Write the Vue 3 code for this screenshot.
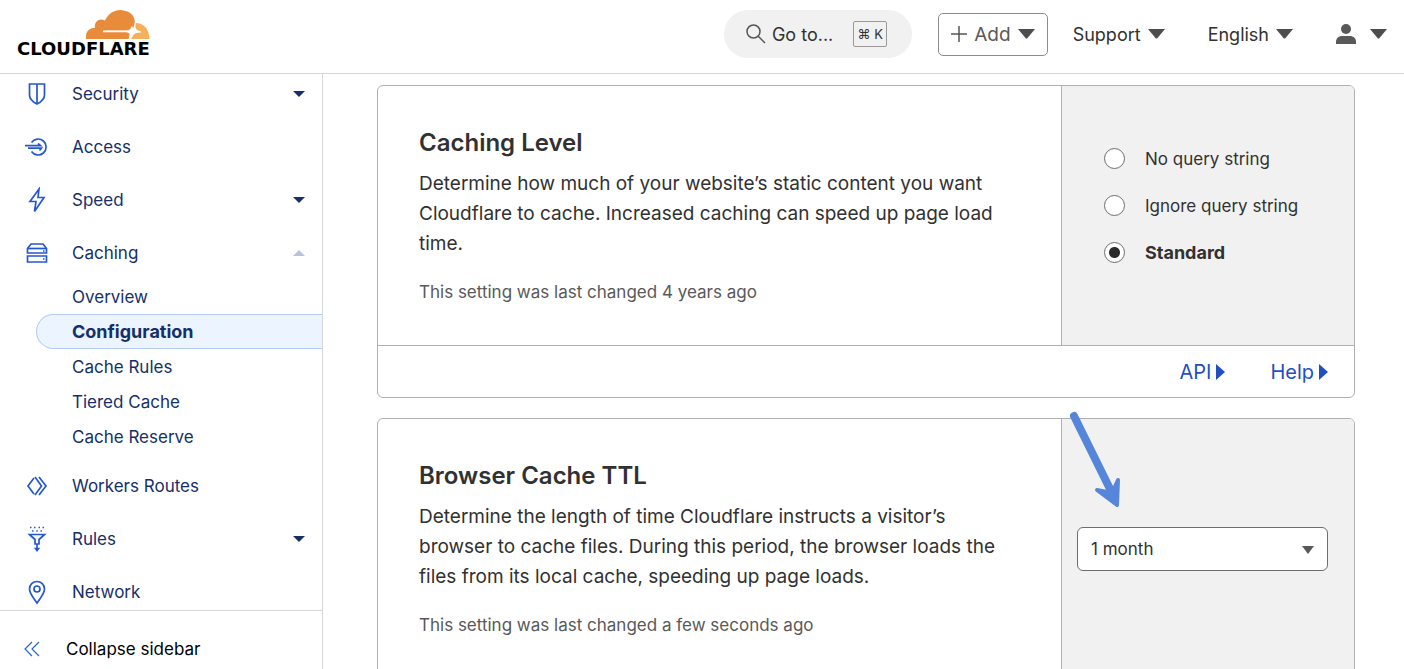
<template>
  <div class="page">
    <header class="topbar">
      <a class="logo" href="#" aria-label="Cloudflare home">
        <svg class="logo-cloud" width="64" height="29" viewBox="0 0 64 29" aria-hidden="true">
          <path
            fill="#e88b3a"
            d="M0 29C-1 22 3 18 9 17.700C8 12 13 7.500 19 10.500C23 3 29-.5 36 .2C45 .8 50 7 48.500 14L46.500 20.500H18L17 21.300H40.500C43 21.600 44 23 43.300 26L42.500 29Z"
          />
          <path fill="#f5b05c" d="M50 13C57 13 63 18 63.500 29H45.500C45 25 46 23.500 49 23L55 22.500V21.500L51 20C49 18 49 16 50 13Z" />
          <path fill="#fff" d="M17 20.700H40C44 20.500 45 18 46 15.500C47 19 48.500 21 53 21.900C48.500 23 47 25 45.500 28C44.500 24.500 43.500 22.700 40 22.300H17Z" />
        </svg>
        <span class="logo-text">CLOUDFLARE</span>
      </a>

      <button class="search" type="button">
        <svg width="20" height="20" viewBox="0 0 20 20" fill="none" stroke="#555" stroke-width="1.500">
          <circle cx="7.500" cy="7.500" r="6.500" />
          <path d="M12.300 12.300L19 19" />
        </svg>
        <span>Go to...</span>
        <kbd>⌘ K</kbd>
      </button>

      <button class="add" type="button">
        <svg width="16" height="16" viewBox="0 0 16 16" fill="none" stroke="#555" stroke-width="1.500">
          <path d="M8 0V16M0 8H16" />
        </svg>
        <span>Add</span>
        <svg class="caret" viewBox="0 0 17 10"><path d="M0 0H17L9.500 9Q8.500 10 7.500 9Z" /></svg>
      </button>

      <button v-for="item in menus" :key="item" class="menu" type="button">
        <span>{{ item }}</span>
        <svg class="caret" viewBox="0 0 17 10"><path d="M0 0H17L9.500 9Q8.500 10 7.500 9Z" /></svg>
      </button>

      <button class="menu user" type="button" aria-label="Account">
        <svg width="20" height="20" viewBox="0 0 20 20" fill="#595959">
          <circle cx="10" cy="5" r="5" />
          <path d="M0 20V18C0 14 3 12 6 12H14C17 12 20 14 20 18V20Z" />
        </svg>
        <svg class="caret" viewBox="0 0 17 10"><path d="M0 0H17L9.500 9Q8.500 10 7.500 9Z" /></svg>
      </button>
    </header>

    <div class="body">
      <aside class="sidebar">
        <nav class="nav">
          <div v-for="item in navItems" :key="item.label" class="nav-group">
            <a class="nav-item" href="#">
              <svg class="nav-icon" viewBox="0 0 26 26" aria-hidden="true">
                <path v-for="d in item.icon" :key="d" :d="d" />
              </svg>
              <span class="nav-label">{{ item.label }}</span>
              <svg v-if="item.children" class="nav-caret open" viewBox="0 0 12 6"><path d="M0 6L6 0L12 6Z" /></svg>
              <svg v-else-if="item.expandable" class="nav-caret" viewBox="0 0 12 6"><path d="M0 0H12L6 6Z" /></svg>
            </a>
            <div v-if="item.children" class="subnav">
              <a
                v-for="child in item.children"
                :key="child"
                class="sub-item"
                :class="{ active: child === activeChild }"
                href="#"
              >{{ child }}</a>
            </div>
          </div>
        </nav>
        <button class="collapse" type="button">
          <svg width="16" height="16" viewBox="0 0 16 16" fill="none" stroke="#2c62d6" stroke-width="1.200">
            <path d="M8 1L1 8L8 15M15 1L8 8L15 15" />
          </svg>
          <span>Collapse sidebar</span>
        </button>
      </aside>

      <main class="content">
        <section class="card">
          <div class="card-main">
            <div class="card-text">
              <h2>Caching Level</h2>
              <p class="desc">
                Determine how much of your website’s static content you want Cloudflare to cache. Increased caching can
                speed up page load time.
              </p>
              <p class="changed">This setting was last changed 4 years ago</p>
            </div>
            <div class="card-side options">
              <label v-for="level in levels" :key="level" class="option" :class="{ checked: level === cachingLevel }">
                <input v-model="cachingLevel" type="radio" name="caching-level" :value="level" />
                <span>{{ level }}</span>
              </label>
            </div>
          </div>
          <div class="card-footer">
            <a v-for="link in ['API', 'Help']" :key="link" href="#">
              {{ link }}
              <svg width="9" height="16" viewBox="0 0 9 16"><path fill="#1f4fc0" d="M0 0L9 8L0 16Z" /></svg>
            </a>
          </div>
        </section>

        <section class="card">
          <div class="card-main">
            <div class="card-text">
              <h2>Browser Cache TTL</h2>
              <p class="desc">
                Determine the length of time Cloudflare instructs a visitor’s browser to cache files. During this
                period, the browser loads the files from its local cache, speeding up page loads.
              </p>
              <p class="changed">This setting was last changed a few seconds ago</p>
            </div>
            <div class="card-side ttl">
              <div class="select-wrap">
                <select v-model="ttl" aria-label="Browser Cache TTL">
                  <option v-for="t in ttls" :key="t">{{ t }}</option>
                </select>
                <svg class="select-caret" width="12" height="8" viewBox="0 0 12 8"><path fill="#595959" d="M0 0H12L6 8Z" /></svg>
              </div>
              <svg class="pointer" width="56" height="100" viewBox="0 0 56 100" aria-hidden="true">
                <path d="M8 7L46 84" stroke="#5686d9" stroke-width="8" stroke-linecap="round" />
                <path
                  d="M31 81L51 96L52 71L46 84Z"
                  fill="#5686d9"
                  stroke="#5686d9"
                  stroke-width="4"
                  stroke-linejoin="round"
                />
              </svg>
            </div>
          </div>
        </section>
      </main>
    </div>
  </div>
</template>

<script setup>
import { ref } from 'vue';

const menus = ['Support', 'English'];

const levels = ['No query string', 'Ignore query string', 'Standard'];
const cachingLevel = ref('Standard');

const ttls = ['1 day', '1 month', '1 year'];
const ttl = ref('1 month');

const activeChild = 'Configuration';

const navItems = [
  {
    label: 'Security',
    expandable: true,
    icon: ['M5.500 3H20.500V14C20.500 18 17 21 13 23C9 21 5.500 18 5.500 14Z', 'M13 3V23']
  },
  {
    label: 'Access',
    icon: [
      'M7.500 8.500A8 8 0 1 1 7.500 17.500',
      'M1 11.700H16.500L14 9.500',
      'M4 14.200H17.500L15.500 16.500'
    ]
  },
  {
    label: 'Speed',
    expandable: true,
    icon: ['M15 2L6 14.500H12L10.500 24.500L20 10.500H14Z']
  },
  {
    label: 'Caching',
    icon: [
      'M3.500 8.500L7 4H19L22.500 8.500V13H3.500Z',
      'M3.500 8.500H22.500',
      'M3.500 16H22.500V22H3.500Z',
      'M19 11H20.500M19 19H20.500'
    ],
    children: ['Overview', 'Configuration', 'Cache Rules', 'Tiered Cache', 'Cache Reserve']
  },
  {
    label: 'Workers Routes',
    icon: ['M10 5L4 13L10 21', 'M11 4L17.500 13L11 22', 'M15 4L22 13L15 22']
  },
  {
    label: 'Rules',
    expandable: true,
    icon: [
      'M6 1.500H7.500M10 1.500H11.500M14.500 1.500H16M18.500 1.500H20',
      'M8 5H9.500M12.300 5H13.800M16.500 5H18',
      'M5.500 8.500H20.500L15 13.500V18H11V13.500Z',
      'M13 18V24M11.500 22.500L13 24.500L14.500 22.500Z'
    ]
  },
  {
    label: 'Network',
    icon: ['M13 24C9 18 5.500 14.500 5.500 10A7.500 7.500 0 0 1 20.500 10C20.500 14.500 17 18 13 24Z', 'M10 10A3 3 0 1 0 16 10A3 3 0 1 0 10 10']
  }
];
</script>

<style>
body {
  background: #fff;
}
</style>

<style scoped>
.page {
  height: 100vh;
  display: flex;
  flex-direction: column;
  overflow: hidden;
  font-family: Inter, "Liberation Sans", sans-serif;
  color: #313131;
}

.page *,
.page {
  box-sizing: border-box;
}

button {
  font: inherit;
  color: inherit;
  background: none;
  border: 0;
  padding: 0;
  cursor: pointer;
}

a {
  text-decoration: none;
}

svg {
  flex: none;
}

/* top bar */
.topbar {
  flex: none;
  display: flex;
  align-items: center;
  height: 74px;
  padding: 0 17px 5px;
  border-bottom: 1px solid #d5d7d8;
  font-size: 18px;
}

.logo {
  display: flex;
  flex-direction: column;
  margin-right: auto;
  color: #000;
}

.logo-cloud {
  align-self: flex-end;
}

.logo-text {
  font-family: "DejaVu Sans", sans-serif;
  font-size: 18px;
  line-height: 20px;
  font-weight: 700;
}

.search {
  display: flex;
  align-items: center;
  height: 48px;
  padding: 0 25px 0 22px;
  border-radius: 24px;
  background: #f1f1f1;
}

.search span {
  margin: 0 20px 0 6px;
}

kbd {
  width: 34px;
  height: 26px;
  border: 1px solid #999;
  border-radius: 2px;
  font: 13px/24px Inter, "DejaVu Sans", sans-serif;
  text-align: center;
}

.add {
  display: flex;
  align-items: center;
  gap: 7px;
  height: 43px;
  margin: 0 25px 0 26px;
  padding: 0 12px;
  border: 1px solid #8c8c8c;
  border-radius: 5px;
  font-size: 19px;
  color: #595959;
}

.menu {
  display: flex;
  align-items: center;
  gap: 7px;
}

.menu + .menu {
  margin-left: 43px;
}

.menu.user {
  gap: 14px;
}

.caret {
  width: 17px;
  height: 10px;
  fill: #4d4d4d;
}

/* sidebar */
.body {
  flex: 1;
  min-height: 0;
  display: flex;
}

.sidebar {
  flex: none;
  width: 323px;
  display: flex;
  flex-direction: column;
  border-right: 1px solid #d5d7d8;
  color: #152f6b;
}

.nav {
  flex: 1;
  min-height: 0;
  display: flex;
  flex-direction: column;
  gap: 13px;
  overflow: hidden;
  font-size: 17px;
}

.nav-item {
  display: flex;
  align-items: center;
  height: 40px;
  padding: 0 17px 0 24px;
  color: #152f6b;
}

.nav-icon {
  width: 26px;
  height: 26px;
  fill: none;
  stroke: #2458cf;
  stroke-width: 1.7;
}

.nav-label {
  flex: 1;
  margin-left: 22px;
}

.nav-caret {
  width: 12px;
  height: 6px;
  fill: #152f6b;
}

.nav-caret.open {
  fill: #b8c2d8;
}

.subnav {
  padding: 6px 0 0 36px;
}

.nav-group:has(.subnav) {
  margin-bottom: -1px;
}

.sub-item {
  display: block;
  height: 35px;
  padding-left: 35px;
  border: 1px solid transparent;
  border-right: 0;
  border-radius: 18px 0 0 18px;
  line-height: 35px;
  color: #152f6b;
}

.sub-item.active {
  background: #ecf4ff;
  border-color: #b5ccf5;
  font-size: 18px;
  line-height: 33px;
  font-weight: 700;
}

.collapse {
  flex: none;
  display: flex;
  align-items: center;
  gap: 26px;
  height: 59px;
  padding: 18px 24px 0;
  border-top: 1px solid #d5d7d8;
  font-size: 17px;
  color: #000;
}

/* settings cards */
.content {
  flex: 1;
  min-width: 0;
  padding: 11px 49px 0 54px;
  overflow: hidden;
}

.card {
  margin-bottom: 20px;
  border: 1px solid #b0b0b0;
  border-radius: 6px;
}

.card-main {
  display: flex;
}

.card-text {
  flex: 1;
  padding: 40px 56px 40px 41px;
}

h2 {
  margin: 0;
  font-size: 24px;
  line-height: 34px;
  font-weight: 600;
}

.desc {
  margin: 9px 0 0;
  font-size: 19px;
  line-height: 30px;
}

.changed {
  margin: 20px 0 0;
  font-size: 17px;
  line-height: 26px;
  color: #595959;
}

.card-side {
  flex: none;
  width: 293px;
  border-left: 1px solid #b0b0b0;
  border-radius: 0 5px 0 0;
  background: #f1f1f1;
}

.options {
  display: flex;
  flex-direction: column;
  gap: 21px;
  padding: 60px 42px 40px;
}

.option {
  display: flex;
  align-items: center;
  gap: 20px;
  font-size: 17px;
  line-height: 26px;
}

.option.checked {
  font-size: 18px;
  font-weight: 700;
}

.option input {
  appearance: none;
  width: 21px;
  height: 21px;
  margin: 0 0 2px;
  border: 1px solid #6e6e6e;
  border-radius: 50%;
  background: #fff;
}

.option input:checked {
  background: radial-gradient(circle, #2b2b2b 5px, #fff 6px);
}

.card-footer {
  display: flex;
  justify-content: flex-end;
  gap: 45px;
  padding: 11px 26px 10px;
  border-top: 1px solid #b0b0b0;
  font-size: 20px;
  line-height: 30px;
}

.card-footer a {
  display: flex;
  align-items: center;
  gap: 5px;
  color: #1f4fc0;
}

.ttl {
  position: relative;
  display: flex;
  align-items: center;
  padding: 0 26px 0 15px;
}

.select-wrap {
  position: relative;
  flex: 1;
}

select {
  appearance: none;
  width: 100%;
  height: 44px;
  padding: 0 13px;
  border: 1px solid #6e6e6e;
  border-radius: 6px;
  background: #fff;
  color: #313131;
  font: 17px Inter, "Liberation Sans", sans-serif;
}

.select-caret {
  position: absolute;
  right: 14px;
  top: 19px;
  pointer-events: none;
}

/* pointer drawn over the card, towards the drop-down */
.pointer {
  position: absolute;
  left: 4px;
  top: -10px;
  fill: none;
}
</style>
